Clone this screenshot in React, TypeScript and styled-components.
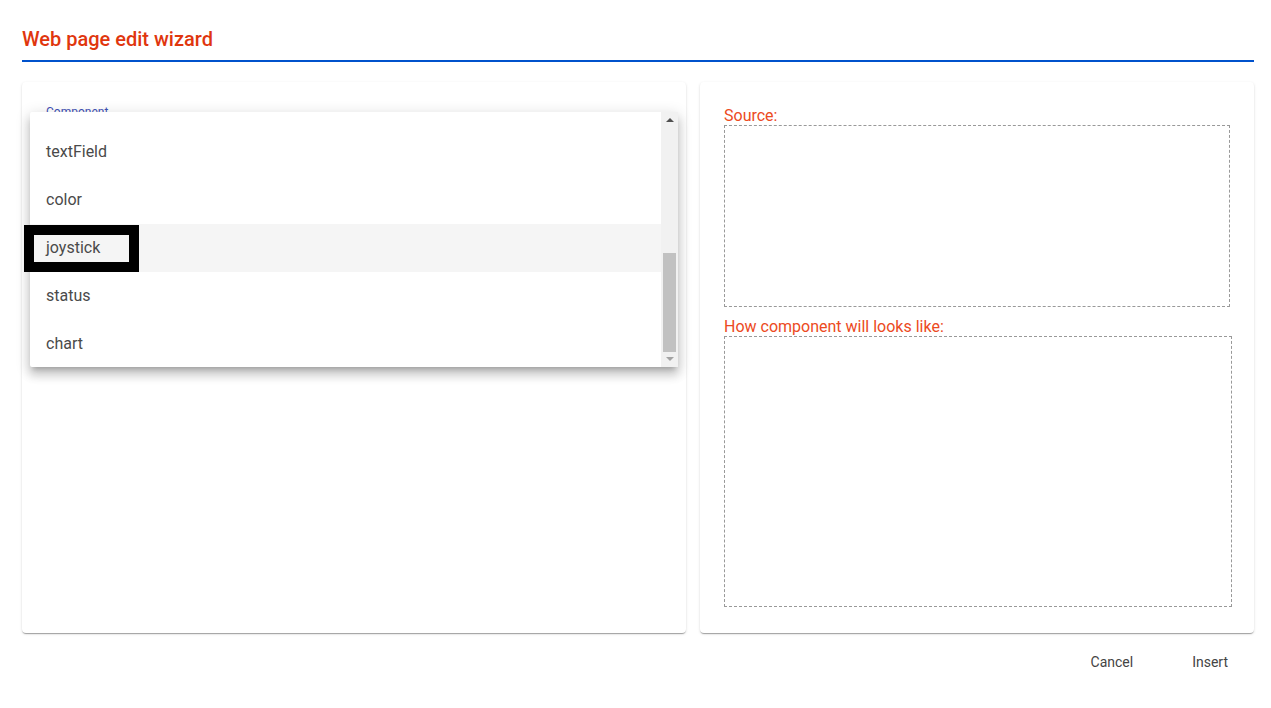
import React from 'react';
import styled, { createGlobalStyle } from 'styled-components';

const GlobalStyle = createGlobalStyle`
  html, body {
    margin: 0;
    padding: 0;
    background: #fff;
    font-family: Roboto, "Liberation Sans", Arial, sans-serif;
  }
`;

const items = ['textField', 'color', 'joystick', 'status', 'chart'];
const focused = 'joystick';

const Page = styled.div`
  padding: 0 17px 0 22px;
  height: 708px;
  box-sizing: border-box;
`;

const Header = styled.div`
  padding: 27px 0 9px;
  border-bottom: 2px solid #0052cc;
`;

const Title = styled.h1`
  margin: 0;
  font-size: 20px;
  line-height: 24px;
  font-weight: 500;
  color: #e0360e;
`;

const Cards = styled.div`
  display: grid;
  grid-template-columns: 664px 1fr;
  gap: 14px;
  margin-top: 20px;
  height: 551px;
`;

const Card = styled.div`
  position: relative;
  background: #fff;
  border-radius: 4px;
  padding: 24px;
  box-sizing: border-box;
  box-shadow: 0 2px 1px -1px rgba(0, 0, 0, 0.2), 0 1px 1px 0 rgba(0, 0, 0, 0.14),
    0 1px 3px 0 rgba(0, 0, 0, 0.12);
`;

const FieldLabel = styled.div`
  font-size: 12px;
  line-height: 12px;
  color: #3f51b5;
`;

const Menu = styled.div`
  position: absolute;
  left: 8px;
  top: 30px;
  width: 648px;
  height: 255px;
  display: flex;
  background: #fff;
  border-radius: 2px;
  box-shadow: 0 5px 5px -3px rgba(0, 0, 0, 0.2), 0 8px 10px 1px rgba(0, 0, 0, 0.14),
    0 3px 14px 2px rgba(0, 0, 0, 0.12);
`;

const List = styled.ul`
  flex: 1;
  margin: 0;
  padding: 16px 0 0;
  list-style: none;
`;

const Item = styled.li<{ $active?: boolean }>`
  position: relative;
  height: 48px;
  box-sizing: border-box;
  display: flex;
  align-items: center;
  padding: 0 0 2px 16px;
  font-size: 16px;
  color: #4a4a4a;
  background: ${(p) => (p.$active ? '#f5f5f5' : 'transparent')};
  &:last-child {
    height: 47px;
    padding-bottom: 0;
  }
`;

const FocusRing = styled.span`
  position: absolute;
  left: -6px;
  top: 1px;
  width: 115px;
  height: 47px;
  box-sizing: border-box;
  border: 10px solid #000;
`;

const Scrollbar = styled.div`
  width: 17px;
  display: flex;
  flex-direction: column;
  background: #f1f1f1;
`;

const Arrow = styled.div<{ $down?: boolean }>`
  height: 17px;
  display: flex;
  align-items: center;
  justify-content: center;
  &::after {
    content: '';
    border-left: 4px solid transparent;
    border-right: 4px solid transparent;
    ${(p) =>
      p.$down ? 'border-top: 4px solid #a3a3a3;' : 'border-bottom: 4px solid #505050;'}
  }
`;

const Track = styled.div`
  flex: 1;
  display: flex;
  flex-direction: column;
  padding: 0 2px;
`;

const Thumb = styled.div<{ $offset: number; $size: number }>`
  margin-top: ${(p) => p.$offset}px;
  height: ${(p) => p.$size}px;
  background: #c1c1c1;
`;

const SectionLabel = styled.div<{ $gap?: number }>`
  margin-top: ${(p) => p.$gap ?? 0}px;
  font-size: 16px;
  line-height: 19px;
  color: #ec4a22;
`;

const DashedBox = styled.div<{ $height: number; $extra?: number }>`
  height: ${(p) => p.$height}px;
  width: calc(100% + ${(p) => p.$extra ?? 0}px);
  box-sizing: border-box;
  border: 1px dashed #999;
`;

const Actions = styled.div`
  display: flex;
  justify-content: flex-end;
  gap: 43px;
  margin-top: 11px;
  padding-right: 18px;
`;

const TextButton = styled.button`
  height: 36px;
  padding: 6px 8px;
  border: none;
  background: transparent;
  font-family: Roboto, "Liberation Sans", Arial, sans-serif;
  font-size: 14px;
  color: #444;
  cursor: pointer;
`;

export default function App() {
  return (
    <Page>
      <GlobalStyle />
      <Header>
        <Title>Web page edit wizard</Title>
      </Header>
      <Cards>
        <Card>
          <FieldLabel>Component</FieldLabel>
          <Menu>
            <List>
              {items.map((name) => (
                <Item key={name} $active={name === focused}>
                  {name === focused && <FocusRing />}
                  {name}
                </Item>
              ))}
            </List>
            <Scrollbar>
              <Arrow />
              <Track>
                <Thumb $offset={125} $size={99} />
              </Track>
              <Arrow $down />
            </Scrollbar>
          </Menu>
        </Card>
        <Card>
          <SectionLabel>Source:</SectionLabel>
          <DashedBox $height={182} />
          <SectionLabel $gap={10}>How component will looks like:</SectionLabel>
          <DashedBox $height={271} $extra={2} />
        </Card>
      </Cards>
      <Actions>
        <TextButton>Cancel</TextButton>
        <TextButton>Insert</TextButton>
      </Actions>
    </Page>
  );
}
